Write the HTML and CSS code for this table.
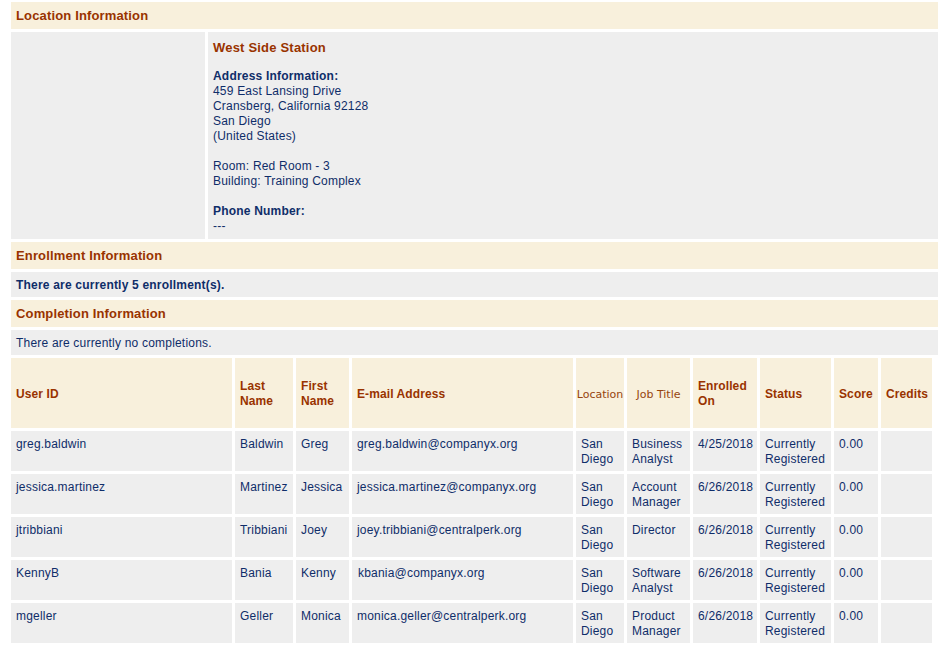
FILE: index.html
```html
<!DOCTYPE html>
<html>
<head>
<meta charset="utf-8">
<link rel="stylesheet" href="styles.css">
</head>
<body>
<div class="page">
  <div class="band">Location Information</div>
  <div class="loc">
    <div class="loc-side"></div>
    <div class="loc-main">
      <div class="loc-title">West Side Station</div>
      <div class="lbl">Address Information:</div>
      <div>459 East Lansing Drive</div>
      <div>Cransberg, California 92128</div>
      <div>San Diego</div>
      <div>(United States)</div>
      <div class="blank"></div>
      <div>Room: Red Room - 3</div>
      <div>Building: Training Complex</div>
      <div class="blank"></div>
      <div class="lbl">Phone Number:</div>
      <div>---</div>
    </div>
  </div>
  <div class="band">Enrollment Information</div>
  <div class="note bold">There are currently 5 enrollment(s).</div>
  <div class="band">Completion Information</div>
  <div class="note">There are currently no completions.</div>
  <table class="grid">
    <thead>
      <tr>
        <th class="c-id">User ID</th>
        <th class="c-last">Last Name</th>
        <th class="c-first">First Name</th>
        <th class="c-mail">E-mail Address</th>
        <th class="c-loc alt">Location</th>
        <th class="c-job alt">Job Title</th>
        <th class="c-enr">Enrolled On</th>
        <th class="c-stat">Status</th>
        <th class="c-score">Score</th>
        <th class="c-cred">Credits</th>
      </tr>
    </thead>
    <tbody>
      <tr>
        <td>greg.baldwin</td><td>Baldwin</td><td>Greg</td><td>greg.baldwin@companyx.org</td>
        <td>San Diego</td><td>Business Analyst</td><td>4/25/2018</td><td>Currently Registered</td><td>0.00</td><td></td>
      </tr>
      <tr>
        <td>jessica.martinez</td><td>Martinez</td><td>Jessica</td><td>jessica.martinez@companyx.org</td>
        <td>San Diego</td><td>Account Manager</td><td>6/26/2018</td><td>Currently Registered</td><td>0.00</td><td></td>
      </tr>
      <tr>
        <td>jtribbiani</td><td>Tribbiani</td><td>Joey</td><td>joey.tribbiani@centralperk.org</td>
        <td>San Diego</td><td>Director</td><td>6/26/2018</td><td>Currently Registered</td><td>0.00</td><td></td>
      </tr>
      <tr>
        <td>KennyB</td><td>Bania</td><td>Kenny</td><td class="nudge">kbania@companyx.org</td>
        <td>San Diego</td><td>Software Analyst</td><td>6/26/2018</td><td>Currently Registered</td><td>0.00</td><td></td>
      </tr>
      <tr>
        <td>mgeller</td><td>Geller</td><td>Monica</td><td>monica.geller@centralperk.org</td>
        <td>San Diego</td><td>Product Manager</td><td>6/26/2018</td><td>Currently Registered</td><td>0.00</td><td></td>
      </tr>
    </tbody>
  </table>
</div>
</body>
</html>
```
FILE: styles.css
```css
html, body {
  margin: 0;
  padding: 0;
  background: #ffffff;
}
body {
  font-family: "Liberation Sans", Arial, sans-serif;
  font-size: 12px;
  line-height: 15px;
  letter-spacing: 0.2px;
  color: #0f2d69;
}
.page {
  width: 927px;
  padding: 2px 0 0 11px;
  display: flex;
  flex-direction: column;
  gap: 3px;
}
.band {
  background: #f8f0dc;
  color: #993300;
  font-weight: bold;
  font-size: 13px;
  letter-spacing: 0.15px;
  height: 27px;
  box-sizing: border-box;
  padding: 1px 0 0 5px;
  line-height: 26px;
}
.loc {
  display: flex;
  gap: 3px;
}
.loc-side {
  width: 194px;
  flex: none;
  background: #eeeeee;
}
.loc-main {
  flex: 1;
  background: #eeeeee;
  padding: 8px 5px 5px 5px;
}
.loc-title {
  color: #993300;
  font-weight: bold;
  font-size: 13px;
  letter-spacing: 0.2px;
  margin-bottom: 14px;
}
.lbl {
  font-weight: bold;
}
.blank {
  height: 15px;
}
.note {
  background: #eeeeee;
  height: 25px;
  box-sizing: border-box;
  padding: 1px 0 0 5px;
  line-height: 24px;
}
.bold {
  font-weight: bold;
}
.grid {
  margin: -3px 0 0 -3px;
  border-collapse: separate;
  border-spacing: 3px;
  table-layout: fixed;
  width: 927px;
}
.grid th,
.grid td {
  box-sizing: border-box;
  padding: 6px 5px 4px 5px;
  text-align: left;
}
.grid th {
  background: #f8f0dc;
  color: #993300;
  font-weight: bold;
  font-size: 12px;
  letter-spacing: 0.1px;
  height: 70px;
  vertical-align: middle;
}
.grid th.alt {
  font-family: "DejaVu Sans", Verdana, sans-serif;
  font-weight: normal;
  font-size: 11px;
  letter-spacing: 0;
  color: #96440e;
  text-align: center;
  padding: 6px 0 4px 0;
}
.grid td {
  background: #eeeeee;
  height: 40px;
  vertical-align: top;
}
.grid td.nudge {
  padding-left: 6px;
}
.c-id { width: 221px; }
.c-last { width: 58px; }
.c-first { width: 53px; }
.c-mail { width: 221px; }
.c-loc { width: 48px; }
.c-job { width: 63px; }
.c-enr { width: 64px; }
.c-stat { width: 71px; }
.c-score { width: 44px; }
.c-cred { width: 51px; }
```
